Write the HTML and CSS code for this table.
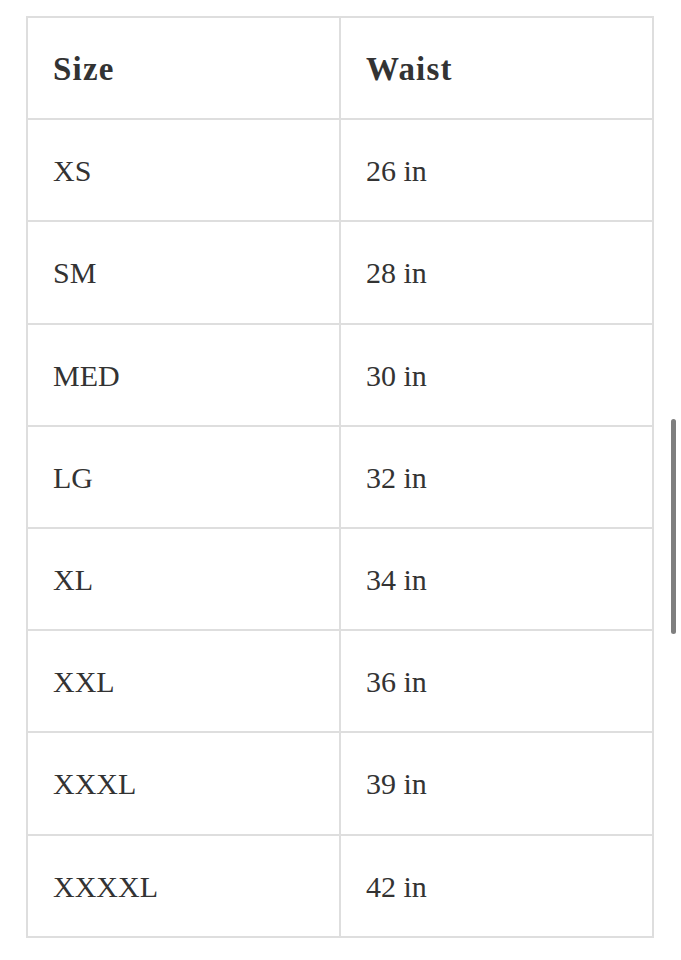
FILE: index.html
```html
<!DOCTYPE html>
<html>
<head>
<meta charset="utf-8">
<link rel="stylesheet" href="styles.css">
</head>
<body>
<div class="page">
  <div class="size-table">
    <div class="cell head">Size</div><div class="cell head">Waist</div>
    <div class="cell">XS</div><div class="cell">26 in</div>
    <div class="cell">SM</div><div class="cell">28 in</div>
    <div class="cell">MED</div><div class="cell">30 in</div>
    <div class="cell">LG</div><div class="cell">32 in</div>
    <div class="cell">XL</div><div class="cell">34 in</div>
    <div class="cell">XXL</div><div class="cell">36 in</div>
    <div class="cell">XXXL</div><div class="cell">39 in</div>
    <div class="cell">XXXXL</div><div class="cell">42 in</div>
  </div>
</div>
<div class="scrollbar"></div>
</body>
</html>
```
FILE: styles.css
```css
html, body {
  margin: 0;
  padding: 0;
  background: #ffffff;
  overflow: hidden;
}
.page {
  padding: 16px 0 0 26px;
}
.size-table {
  width: 628px;
  box-sizing: border-box;
  display: grid;
  grid-template-columns: 1fr 1fr;
  grid-auto-rows: 100.2px;
  gap: 2px;
  padding: 2px;
  background: #dedede;
}
.cell {
  background: #ffffff;
  display: flex;
  align-items: center;
  padding: 2px 0 0 25px;
  font-family: "Liberation Serif", "Times New Roman", serif;
  font-size: 30px;
  color: #333333;
}
.num {
  letter-spacing: 0.5px;
}
.head {
  font-weight: bold;
  font-size: 33px;
  letter-spacing: 1.2px;
}
.scrollbar {
  position: fixed;
  left: 671px;
  top: 419px;
  width: 5px;
  height: 215px;
  border-radius: 3px;
  background: #7f7f7f;
}
```
